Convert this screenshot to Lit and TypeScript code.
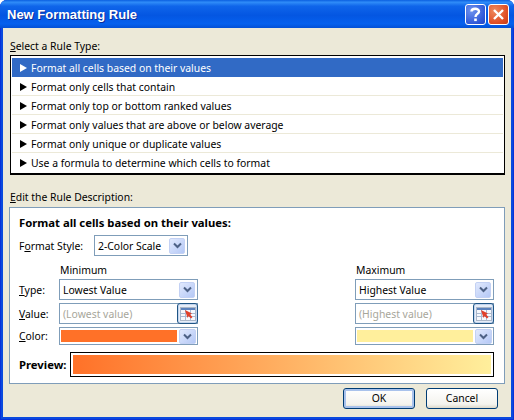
import { LitElement, html, css, svg } from "lit";
import { customElement } from "lit/decorators.js";

const chevron = svg`<svg class="chev" width="9" height="7" viewBox="0 0 9 7"><path d="M1 1.500 L4.500 5 L8 1.500" fill="none" stroke="#4d6185" stroke-width="2"/></svg>`;

const rules = [
  "Format all cells based on their values",
  "Format only cells that contain",
  "Format only top or bottom ranked values",
  "Format only values that are above or below average",
  "Format only unique or duplicate values",
  "Use a formula to determine which cells to format",
];

@customElement("app-root")
export class AppRoot extends LitElement {
  static styles = css`
    :host { display: block; width: 514px; height: 420px; font: 10.4px/13px "Noto Sans", Tahoma, sans-serif; color: #000; background: #fff; }
    * { box-sizing: border-box; }
    u { text-decoration: underline; }
    .win { width: 514px; height: 420px; display: flex; flex-direction: column; background: #0a4ade; border-radius: 7px 7px 0 0; overflow: hidden; box-shadow: inset 1px 0 0 #0831d9, inset -1px 0 0 #0831d9, inset 0 -1px 0 #0831d9; }
    .title { height: 28px; flex: none; display: flex; align-items: center; gap: 2px; padding: 1px 5px 0 7px;
      background: linear-gradient(180deg, #0a5fe0 0%, #2f8cf8 8%, #0f65ea 22%, #0456e2 55%, #0560ee 85%, #0350d6 100%); }
    .title h1 { flex: 1; margin: 0; font: bold 13px "Liberation Sans", sans-serif; color: #fff; text-shadow: 1px 1px 0 #0a2c9a; }
    .tb { width: 21px; height: 21px; border: 1px solid #fff; border-radius: 3px; display: flex; align-items: center; justify-content: center; }
    .help { background: radial-gradient(circle at 30% 30%, #6f93ee, #2f58d8 70%, #2446c4); color: #fff; }
    .close { background: radial-gradient(circle at 30% 30%, #ef8a5e, #e04f26 65%, #c63c16); }
    .client { flex: 1; margin: 0 3px 3px; background: #ece9d8; padding: 12px 6px 0 7px; display: flex; flex-direction: column; }
    .cap { height: 13px; margin-bottom: 2px; }
    .list { height: 120px; flex: none; border: 1px solid #000; border-bottom-width: 2px; background: #fff; padding: 2px 1px 1px; display: flex; flex-direction: column; }
    .row { height: 19px; flex: none; display: flex; align-items: center; gap: 4px; padding: 1px 0 0 8px; box-shadow: inset 0 -1px 0 #ece9d8; }
    .row:last-child { box-shadow: none; }
    .row.on { background: #316ac5; color: #fff; box-shadow: none; }
    .tri { width: 0; height: 0; border-left: 7px solid currentColor; border-top: 4px solid transparent; border-bottom: 4px solid transparent; }
    .edit { margin-top: 16px; margin-bottom: 3px; height: 13px; }
    .panel { height: 177px; flex: none; margin-left: -1px; border: 1px solid #7f9db9; background: #fff; padding: 8px 10px 0 9px; display: flex; flex-direction: column; }
    .hd { font-weight: bold; font-size: 11.3px; height: 13px; white-space: nowrap; }
    .fs { display: flex; align-items: center; margin-top: 6px; height: 21px; }
    .fs .lb { width: 75px; }
    .lb { padding-top: 2px; }
    .fs .sel { width: 94px; height: 21px; }
    .grid { display: grid; grid-template-columns: 40px 139px 157px 139px; grid-template-rows: 13px 21px 21px 18px; row-gap: 3px; margin-top: 7px; align-items: center; }
    .grid .mm { padding: 1px 0 0 1px; margin-bottom: -1px; }
    .sel { border: 1px solid #7f9db9; background: #fff; display: flex; align-items: center; padding: 0 2px 0 3px; height: 21px; }
    .t { flex: 1; white-space: nowrap; padding-top: 1px; }
    .dd { width: 16px; height: 16px; flex: none; border-radius: 2px; border: 1px solid #c3d1f4; background: linear-gradient(135deg, #e1e9fd, #b4c8f6); display: flex; align-items: center; justify-content: center; }
    .val { border: 1px solid #7f9db9; background: #fff; display: flex; align-items: center; height: 21px; padding-left: 3px; color: #a7a69a; }
    .refb { width: 21px; height: 21px; flex: none; margin-right: -1px; border: 1px solid #1f5585; border-radius: 3px; background: #e6edf8; box-shadow: inset 0 0 0 1px #c3d5ee; display: flex; align-items: center; justify-content: center; }
    .col { height: 18px; padding: 0 1px; gap: 2px; }
    .col .sw { flex: 1; height: 12px; }
    .col .dd { height: 15px; width: 17px; }
    .sw.lo { background: #ff7128; }
    .sw.hi { background: #ffef9c; }
    .pv { display: flex; align-items: center; margin-top: 7px; }
    .pv b { width: 51px; font-size: 11.3px; }
    .box { width: 424px; height: 25px; border: 1px solid #000; padding: 2px; background: #fff; }
    .box div { height: 100%; background: linear-gradient(90deg, #ff7128, #ffef9c); }
    .foot { display: flex; justify-content: flex-end; gap: 11px; margin-top: 4px; padding-right: 7px; }
    .btn { width: 72px; height: 21px; border: 1px solid #003c74; border-radius: 3px; background: linear-gradient(180deg, #fff, #f4f3ee 80%, #dcd8ca); display: flex; align-items: center; justify-content: center; }
    .btn.def { box-shadow: inset 0 0 0 2px #a9c2ec; }
  `;

  private refIcon() {
    return svg`<svg width="16" height="14" viewBox="0 0 16 14">
      <rect x=".5" y=".5" width="15" height="13" fill="#f6f8fc" stroke="#a9b6c9"/>
      <rect x="1" y="1" width="14" height="2" fill="#5c82bd"/>
      <path d="M1 6.500H15M1 9.500H15M5.500 3V13M10.500 3V13" stroke="#a9bad2"/>
      <path d="M5 3 L12 6.500 L10 7.500 L12.500 10 L11 11.500 L8.500 9 L7.500 11 Z" fill="#e0402a"/>
    </svg>`;
  }

  render() {
    return html`<div class="win">
      <div class="title">
        <h1>New Formatting Rule</h1>
        <div class="tb help"><svg width="13" height="15" viewBox="0 0 13 15"><path d="M2.500 4.500C2.500 1 10 .8 10 4.500 10 7 6.500 6.500 6.500 10" fill="none" stroke="#fff" stroke-width="2.400"/><rect x="5.200" y="11.500" width="2.600" height="2.600" fill="#fff"/></svg></div>
        <div class="tb close"><svg width="13" height="13" viewBox="0 0 13 13"><path d="M2 2 L11 11 M11 2 L2 11" stroke="#fff" stroke-width="2.400"/></svg></div>
      </div>
      <div class="client">
        <div class="cap"><u>S</u>elect a Rule Type:</div>
        <div class="list">
          ${rules.map((r, i) => html`<div class="row ${i === 0 ? "on" : ""}"><span class="tri"></span><span>${r}</span></div>`)}
        </div>
        <div class="edit"><u>E</u>dit the Rule Description:</div>
        <div class="panel">
          <div class="hd">Format all cells based on their values:</div>
          <div class="fs">
            <span class="lb">F<u>o</u>rmat Style:</span>
            <div class="sel"><span class="t">2-Color Scale</span><span class="dd">${chevron}</span></div>
          </div>
          <div class="grid">
            <span></span><span class="mm">Minimum</span><span></span><span class="mm">Maximum</span>
            <span class="lb"><u>T</u>ype:</span>
            <div class="sel"><span class="t">Lowest Value</span><span class="dd">${chevron}</span></div>
            <span></span>
            <div class="sel"><span class="t">Highest Value</span><span class="dd">${chevron}</span></div>
            <span class="lb"><u>V</u>alue:</span>
            <div class="val"><span class="t">(Lowest value)</span><span class="refb">${this.refIcon()}</span></div>
            <span></span>
            <div class="val"><span class="t">(Highest value)</span><span class="refb">${this.refIcon()}</span></div>
            <span><u>C</u>olor:</span>
            <div class="sel col"><span class="sw lo"></span><span class="dd">${chevron}</span></div>
            <span></span>
            <div class="sel col"><span class="sw hi"></span><span class="dd">${chevron}</span></div>
          </div>
          <div class="pv"><b>Preview:</b><div class="box"><div></div></div></div>
        </div>
        <div class="foot">
          <div class="btn def">OK</div>
          <div class="btn">Cancel</div>
        </div>
      </div>
    </div>`;
  }
}
